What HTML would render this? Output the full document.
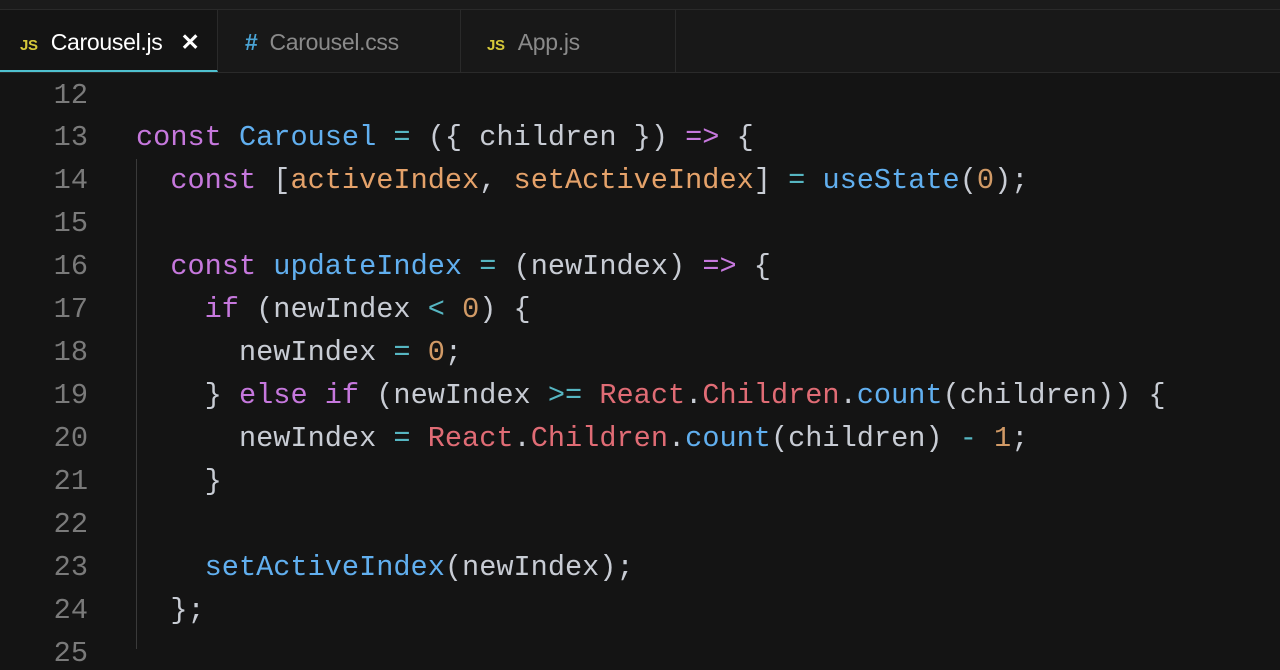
<!DOCTYPE html>
<html><head><style>
body{margin:0;width:1280px;height:642px;background:#141414;overflow:hidden;font-family:"Liberation Mono",monospace;position:relative}
.top{position:absolute;left:0;top:0;width:1280px;height:9px;background:#1b1b1b;border-bottom:1px solid #2a2a2a}
.tabs{position:absolute;left:0;top:10px;width:1280px;height:62px;background:#181818;border-bottom:1px solid #2a2a2a}
.tab{position:absolute;top:0;height:62px;font-family:"Liberation Sans",sans-serif;font-size:23px;line-height:64px;color:#8a8a8a;border-right:1px solid #2a2a2a;box-sizing:border-box;letter-spacing:-0.3px}
.tab .i{font-weight:bold;font-size:15px;color:#d6c93a;margin-right:13px}
.act{background:#141414;color:#fff;border-bottom:2px solid #4fc1d0}
.code{position:absolute;left:0;top:75px;width:1280px}
.ln{position:absolute;left:0;width:88px;text-align:right;color:#7a7a7a;font-size:28.6px}
.l{position:absolute;left:136px;font-size:28.6px;color:#c8ccd4;white-space:pre}
.k{color:#c678dd}.f{color:#61afef}.o{color:#56b6c2}.v{color:#e5a26a}.n{color:#d19a66}.r{color:#e06c75}
.guide{position:absolute;left:136px;top:159px;width:1px;height:490px;background:#3a3a3a}
</style></head><body>
<div class="top"></div>
<div class="tabs">
<div class="tab act" style="left:0;width:218px;padding-left:20px"><span class="i">JS</span>Carousel.js<span style="margin-left:18px;font-weight:bold">✕</span></div>
<div class="tab" style="left:218px;width:243px;padding-left:27px"><span class="i" style="color:#4aa3d4;font-size:23px;margin-right:12px">#</span>Carousel.css</div>
<div class="tab" style="left:461px;width:215px;padding-left:26px"><span class="i">JS</span>App.js</div>
</div>
<div class="guide"></div>
<div class="code">
<div class="ln" style="top:4px">12</div>
<div class="ln" style="top:46px">13</div><div class="l" style="top:46px"><span class="k">const</span> <span class="f">Carousel</span> <span class="o">=</span> ({ children }) <span class="k">=&gt;</span> {</div>
<div class="ln" style="top:89px">14</div><div class="l" style="top:89px">  <span class="k">const</span> [<span class="v">activeIndex</span>, <span class="v">setActiveIndex</span>] <span class="o">=</span> <span class="f">useState</span>(<span class="n">0</span>);</div>
<div class="ln" style="top:132px">15</div>
<div class="ln" style="top:175px">16</div><div class="l" style="top:175px">  <span class="k">const</span> <span class="f">updateIndex</span> <span class="o">=</span> (newIndex) <span class="k">=&gt;</span> {</div>
<div class="ln" style="top:218px">17</div><div class="l" style="top:218px">    <span class="k">if</span> (newIndex <span class="o">&lt;</span> <span class="n">0</span>) {</div>
<div class="ln" style="top:261px">18</div><div class="l" style="top:261px">      newIndex <span class="o">=</span> <span class="n">0</span>;</div>
<div class="ln" style="top:304px">19</div><div class="l" style="top:304px">    } <span class="k">else if</span> (newIndex <span class="o">&gt;=</span> <span class="r">React</span>.<span class="r">Children</span>.<span class="f">count</span>(children)) {</div>
<div class="ln" style="top:347px">20</div><div class="l" style="top:347px">      newIndex <span class="o">=</span> <span class="r">React</span>.<span class="r">Children</span>.<span class="f">count</span>(children) <span class="o">-</span> <span class="n">1</span>;</div>
<div class="ln" style="top:390px">21</div><div class="l" style="top:390px">    }</div>
<div class="ln" style="top:433px">22</div>
<div class="ln" style="top:476px">23</div><div class="l" style="top:476px">    <span class="f">setActiveIndex</span>(newIndex);</div>
<div class="ln" style="top:519px">24</div><div class="l" style="top:519px">  };</div>
<div class="ln" style="top:562px">25</div>
</div>
</body></html>
